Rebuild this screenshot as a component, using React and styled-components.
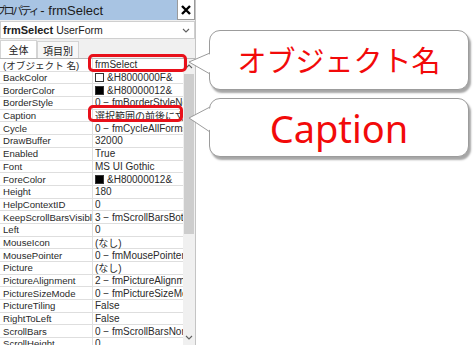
import React from 'react';
import styled, { createGlobalStyle } from 'styled-components';

const GlobalStyle = createGlobalStyle`
    html, body {
        margin: 0;
        padding: 0;
        background: #ffffff;
        overflow: hidden;
    }
`;

const Page = styled.div`
    display: flex;
    flex-direction: row;
    width: 474px;
    height: 345px;
    overflow: hidden;
    background: #ffffff;
    font-family: "Liberation Sans", "Noto Sans CJK JP", sans-serif;
`;

const Panel = styled.div`
    display: flex;
    flex-direction: column;
    width: 196px;
    height: 345px;
    flex-shrink: 0;
    box-sizing: border-box;
    border-right: 1px solid #c4c4c4;
    background: #f0f0f0;
`;

const TitleBar = styled.div`
    display: flex;
    align-items: center;
    height: 20px;
    background: #a8c4e3;
    overflow: hidden;
`;

const TitleText = styled.div`
    flex: 1;
    margin-left: -5px;
    font-size: 13px;
    color: #1b1b1b;
    white-space: nowrap;
    overflow: hidden;
`;

const Kana = styled.span`
    font-family: "Noto Sans CJK JP", sans-serif;
    font-size: 11px;
    letter-spacing: -2.4px;
    margin-right: 3px;
`;

const CloseButton = styled.div`
    display: flex;
    align-items: center;
    justify-content: center;
    width: 16px;
    height: 19px;
    background: #ffffff;
    border: 1px solid #9a9a9a;
    border-top: none;
`;

const ComboRow = styled.div`
    display: flex;
    align-items: center;
    height: 16px;
    margin-top: 1px;
    padding: 0 4px 0 2px;
    background: #ffffff;
    border: 1px solid #cfcfcf;
    font-size: 10.5px;
    color: #222;
`;

const ComboName = styled.b`
    font-weight: bold;
    font-size: 11px;
    margin-right: 3px;
`;

const ComboType = styled.span`
    flex: 1;
`;

const TabStrip = styled.div`
    display: flex;
    align-items: flex-end;
    height: 19px;
    background: #f0f0f0;
`;

const Tab = styled.div`
    display: flex;
    align-items: center;
    justify-content: center;
    height: ${p => (p.$active ? '18px' : '17px')};
    width: ${p => p.$width}px;
    box-sizing: border-box;
    background: ${p => (p.$active ? '#ffffff' : '#f7f7f7')};
    border: 1px solid #d4d4d4;
    border-bottom: none;
    font-family: "Noto Sans CJK JP", sans-serif;
    font-size: 10px;
    color: #222;
`;

const Grid = styled.div`
    display: flex;
    flex: 1;
    min-height: 0;
    border-top: 1px solid #b8b8b8;
    background: #ffffff;
`;

const Table = styled.div`
    flex: 1;
    min-width: 0;
    display: grid;
    grid-template-columns: 93px minmax(0, 1fr);
    grid-auto-rows: 12.7px;
    align-content: start;
`;

const Cell = styled.div`
    position: relative;
    display: flex;
    align-items: center;
    min-width: 0;
    box-sizing: border-box;
    padding-left: ${p => (p.$value ? '2px' : '3px')};
    border-bottom: 1px solid #dedede;
    border-right: ${p => (p.$value ? 'none' : '1px solid #dedede')};
    font-size: ${p => (p.$value ? '10px' : '9.6px')};
    color: #2a2a2a;
    white-space: pre;

    &::after {
        content: '';
        display: ${p => (p.$mark ? 'block' : 'none')};
        position: absolute;
        top: -5px;
        left: -5px;
        right: ${p => (p.$mark === 'wide' ? '-4px' : '0')};
        bottom: -1px;
        border: 3px solid #e8101a;
        border-radius: 5px;
        z-index: 2;
    }
`;

const CellText = styled.span`
    flex: 1;
    min-width: 0;
    overflow: hidden;
`;

const Swatch = styled.span`
    flex-shrink: 0;
    width: 9px;
    height: 9px;
    margin-right: 3px;
    box-sizing: border-box;
    border: 1px solid #333;
    background: ${p => p.$color};
`;

const ScrollBar = styled.div`
    display: flex;
    flex-direction: column;
    flex-shrink: 0;
    width: 12px;
    background: #f0f0f0;
`;

const Arrow = styled.div`
    display: flex;
    align-items: center;
    justify-content: center;
    height: 15px;
`;

const Thumb = styled.div`
    height: 160px;
    margin: 0 1px;
    background: #cdcdcd;
`;

const Track = styled.div`
    flex: 1;
`;

const Callouts = styled.div`
    display: flex;
    flex-direction: column;
    gap: 8px;
    padding-top: 30px;
    margin-left: 13px;
`;

const Bubble = styled.div`
    position: relative;
    display: flex;
    align-items: center;
    justify-content: center;
    width: 260px;
    height: ${p => p.$height}px;
    box-sizing: border-box;
    background: #ffffff;
    border: 1px solid #9c9c9c;
    border-radius: 11px;
    box-shadow: 2px 3px 2px rgba(0, 0, 0, 0.35);
    color: #f20a0a;
    font-family: "Noto Sans", "Noto Sans CJK JP", sans-serif;
    font-size: ${p => p.$size}px;
    line-height: 1;
`;

const Tail = styled.svg`
    position: absolute;
    left: -21px;
    top: 0;
    overflow: visible;
`;

const rows = [
    ['(オブジェクト 名)', 'frmSelect', { mark: 'wide' }],
    ['BackColor', '&H8000000F&', { swatch: '#ffffff' }],
    ['BorderColor', '&H80000012&', { swatch: '#000000' }],
    ['BorderStyle', '0 − fmBorderStyleNone'],
    ['Caption', '選択範囲の前後に文字を挿入', { mark: 'narrow' }],
    ['Cycle', '0 − fmCycleAllForms'],
    ['DrawBuffer', '32000'],
    ['Enabled', 'True'],
    ['Font', 'MS UI Gothic'],
    ['ForeColor', '&H80000012&', { swatch: '#000000' }],
    ['Height', '180'],
    ['HelpContextID', '0'],
    ['KeepScrollBarsVisible', '3 − fmScrollBarsBoth'],
    ['Left', '0'],
    ['MouseIcon', '(なし)'],
    ['MousePointer', '0 − fmMousePointerDefault'],
    ['Picture', '(なし)'],
    ['PictureAlignment', '2 − fmPictureAlignmentCenter'],
    ['PictureSizeMode', '0 − fmPictureSizeModeClip'],
    ['PictureTiling', 'False'],
    ['RightToLeft', 'False'],
    ['ScrollBars', '0 − fmScrollBarsNone'],
    ['ScrollHeight', '0'],
];

function Chevron({ up }) {
    return (
        <svg width="8" height="5" viewBox="0 0 8 5">
            <polyline
                points={up ? '1,4 4,1 7,4' : '1,1 4,4 7,1'}
                fill="none"
                stroke="#606060"
                strokeWidth="1.1"
            />
        </svg>
    );
}

// Speech bubble pointer drawn over the bubble's left border
function BubbleTail({ tip, top, bottom }) {
    return (
        <Tail width="24" height={bottom + 2}>
            <polygon points={`0,${tip} 24,${top} 24,${bottom}`} fill="#ffffff" />
            <polyline
                points={`21,${top} 0,${tip} 21,${bottom}`}
                fill="none"
                stroke="#9c9c9c"
                strokeWidth="1"
            />
        </Tail>
    );
}

export default function App() {
    return (
        <Page>
            <GlobalStyle />
            <Panel>
                <TitleBar>
                    <TitleText>
                        <Kana>プロパティ</Kana>- frmSelect
                    </TitleText>
                    <CloseButton>
                        <svg width="10" height="10" viewBox="0 0 10 10">
                            <path d="M1 1 L9 9 M9 1 L1 9" stroke="#000" strokeWidth="2.4" />
                        </svg>
                    </CloseButton>
                </TitleBar>
                <ComboRow>
                    <ComboName>frmSelect</ComboName>
                    <ComboType>UserForm</ComboType>
                    <Chevron />
                </ComboRow>
                <TabStrip>
                    <Tab $active $width={37}>全体</Tab>
                    <Tab $width={42}>項目別</Tab>
                </TabStrip>
                <Grid>
                    <Table>
                        {rows.map(([name, value, opts = {}]) => (
                            <React.Fragment key={name}>
                                <Cell>
                                    <CellText>{name}</CellText>
                                </Cell>
                                <Cell $value $mark={opts.mark}>
                                    {opts.swatch && <Swatch $color={opts.swatch} />}
                                    <CellText>{value}</CellText>
                                </Cell>
                            </React.Fragment>
                        ))}
                    </Table>
                    <ScrollBar>
                        <Arrow><Chevron up /></Arrow>
                        <Thumb />
                        <Track />
                        <Arrow><Chevron /></Arrow>
                    </ScrollBar>
                </Grid>
            </Panel>
            <Callouts>
                <Bubble $height={60} $size={29}>
                    <BubbleTail tip={31} top={22} bottom={43} />
                    オブジェクト名
                </Bubble>
                <Bubble $height={59} $size={38}>
                    <BubbleTail tip={19} top={8} bottom={33} />
                    Caption
                </Bubble>
            </Callouts>
        </Page>
    );
}
